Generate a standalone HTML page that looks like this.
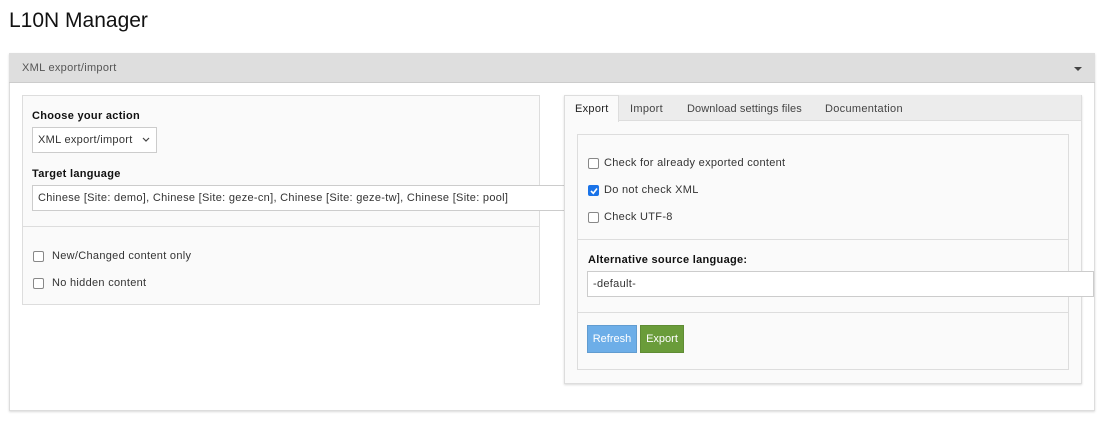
<!DOCTYPE html>
<html><head><style>
*{box-sizing:border-box;margin:0;padding:0}
body{width:1108px;height:426px;background:#fff;font-family:"Liberation Sans",sans-serif;font-size:11px;letter-spacing:0.3px;color:#333;position:relative;overflow:hidden}
.a{position:absolute}
h1{position:absolute;left:9px;top:9px;font-size:21px;letter-spacing:0;font-weight:normal;color:#111}
.panel{left:9px;top:53px;width:1086px;height:358px;border:1px solid #ddd;box-shadow:0 1px 2px rgba(0,0,0,.15)}
.hdr{left:9px;top:53px;width:1086px;height:30px;background:#dedede;border-bottom:1px solid #ccc}
.box{background:#fafafa;border:1px solid #ddd}
b{font-weight:bold;color:#111}
.cb{width:11px;height:11px;border:1px solid #888;border-radius:2px;background:#fff}
.inp{background:#fff;border:1px solid #ccc;padding:0 5px;line-height:25px;color:#333}
.line{height:1px;background:#ddd}
.btn{color:#fff;line-height:26px;height:28px;text-align:center;letter-spacing:0;border:1px solid rgba(0,0,0,.1)}
</style></head><body>
<h1>L10N Manager</h1>
<div class="a panel"></div>
<div class="a hdr"></div>
<div class="a" style="left:22px;top:62px;color:#555">XML export/import</div>
<div class="a" style="left:1074px;top:67px;width:0;height:0;border-left:4px solid transparent;border-right:4px solid transparent;border-top:4px solid #444"></div>

<div class="a box" style="left:22px;top:95px;width:518px;height:210px"></div>
<div class="a" style="left:32px;top:110px"><b>Choose your action</b></div>
<div class="a inp" style="left:32px;top:127px;width:125px;height:26px">XML export/import</div>
<svg class="a" style="left:142px;top:137px" width="8" height="6"><path d="M1 1L4 4L7 1" stroke="#444" fill="none" stroke-width="1.2"/></svg>
<div class="a" style="left:32px;top:168px"><b>Target language</b></div>
<div class="a inp" style="left:32px;top:185px;width:540px;height:26px">Chinese [Site: demo], Chinese [Site: geze-cn], Chinese [Site: geze-tw], Chinese [Site: pool]</div>
<div class="a line" style="left:23px;top:226px;width:516px"></div>
<div class="a cb" style="left:33px;top:251px"></div>
<div class="a" style="left:52px;top:250px">New/Changed content only</div>
<div class="a cb" style="left:33px;top:278px"></div>
<div class="a" style="left:52px;top:277px">No hidden content</div>

<div class="a box" style="left:564px;top:95px;width:518px;height:289px;box-shadow:0 1px 2px rgba(0,0,0,.15)"></div>
<div class="a" style="left:565px;top:95px;width:516px;height:26px;background:#ececec;border-bottom:1px solid #ddd"></div>
<div class="a" style="left:564px;top:95px;width:55px;height:27px;background:#fafafa;border:1px solid #ddd;border-bottom:none"></div>
<div class="a" style="left:575px;top:103px;color:#222">Export</div>
<div class="a" style="left:630px;top:103px;color:#444">Import</div>
<div class="a" style="left:687px;top:103px;color:#444;letter-spacing:0.1px">Download settings files</div>
<div class="a" style="left:825px;top:103px;color:#444">Documentation</div>
<div class="a box" style="left:577px;top:134px;width:492px;height:236px"></div>
<div class="a cb" style="left:588px;top:158px"></div>
<div class="a" style="left:604px;top:157px">Check for already exported content</div>
<div class="a cb" style="left:588px;top:185px;background:#1a73e8;border-color:#1a73e8"></div>
<svg class="a" style="left:589px;top:186px" width="10" height="10"><path d="M2 5L4.3 7.3L8 2.5" stroke="#fff" fill="none" stroke-width="1.6"/></svg>
<div class="a" style="left:604px;top:184px">Do not check XML</div>
<div class="a cb" style="left:588px;top:212px"></div>
<div class="a" style="left:604px;top:211px">Check UTF-8</div>
<div class="a line" style="left:578px;top:239px;width:490px"></div>
<div class="a" style="left:588px;top:254px"><b>Alternative source language:</b></div>
<div class="a inp" style="left:587px;top:271px;width:507px;height:26px">-default-</div>
<div class="a line" style="left:578px;top:312px;width:490px"></div>
<div class="a btn" style="left:587px;top:325px;width:50px;background:#6daee8">Refresh</div>
<div class="a btn" style="left:640px;top:325px;width:44px;background:#6a9c3a">Export</div>
</body></html>
